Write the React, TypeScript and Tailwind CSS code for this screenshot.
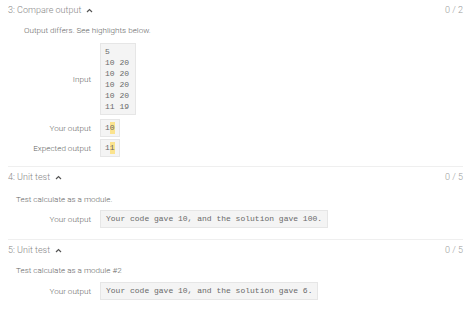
import React from "react";

const Caret = () => (
  <svg width="7" height="5" viewBox="0 0 7 5" className="ml-[5px] mt-[1px]">
    <path d="M1 4 L3.5 1.5 L6 4" fill="none" stroke="#555" strokeWidth="1.2" />
  </svg>
);

const Header = ({ title, score }: { title: string; score: string }) => (
  <div className="flex h-[20px] items-center justify-between text-[9px]">
    <div className="flex items-center text-[#888]">
      <span>{title}</span>
      <Caret />
    </div>
    <span className="text-[#999]">{score}</span>
  </div>
);

const mono = "font-['Liberation_Mono',monospace] text-[8px] text-[#6a6a6a]";

const Row = ({ label, children, className = "" }: { label: string; children: React.ReactNode; className?: string }) => (
  <div className={"flex items-center " + className}>
    <div className="w-[83px] text-right text-[#666]">{label}</div>
    <div className="ml-[9px]">{children}</div>
  </div>
);

const Hl = ({ c }: { c: string }) => <span className="bg-[#fbe38e]">{c}</span>;

export default function App() {
  return (
    <div className="w-[474px] h-[310px] bg-white pl-[8px] pr-[11px] font-['Roboto',sans-serif] text-[8.1px] font-light leading-[12px]">
      <Header title="3: Compare output" score="0 / 2" />
      <div className="mt-[4px] pl-[16px] text-[#666]">Output differs. See highlights below.</div>
      <Row label="Input" className="mt-[7px]">
        <div className={mono + " whitespace-pre bg-[#f4f4f4] border border-[#e6e6e6] px-[4px] py-[2px] leading-[11px] w-[36px]"}>
          {"5\n10 20\n10 20\n10 20\n10 20\n11 19"}
        </div>
      </Row>
      <Row label="Your output" className="mt-[4px]">
        <div className={mono + " bg-[#f4f4f4] border border-[#e6e6e6] px-[4px] h-[18px] flex items-center"}>
          1<Hl c="0" />
        </div>
      </Row>
      <Row label="Expected output" className="mt-[2px]">
        <div className={mono + " bg-[#f4f4f4] border border-[#e6e6e6] px-[4px] h-[18px] flex items-center"}>
          1<Hl c="1" />
        </div>
      </Row>
      <div className="mt-[9px] border-t border-[#efefef]" />
      <Header title="4: Unit test" score="0 / 5" />
      <div className="mt-[6px] pl-[8px] text-[#666]">Test calculate as a module.</div>
      <Row label="Your output" className="mt-[5px]">
        <div className={mono + " bg-[#f4f4f4] border border-[#e6e6e6] px-[5px] h-[18px] flex items-center whitespace-pre"}>
          Your code gave 10, and the solution gave 100.
        </div>
      </Row>
      <div className="mt-[11px] border-t border-[#efefef]" />
      <Header title="5: Unit test" score="0 / 5" />
      <div className="mt-[4px] pl-[8px] text-[#666]">Test calculate as a module #2</div>
      <Row label="Your output" className="mt-[6px]">
        <div className={mono + " bg-[#f4f4f4] border border-[#e6e6e6] px-[5px] h-[18px] flex items-center whitespace-pre"}>
          Your code gave 10, and the solution gave 6.
        </div>
      </Row>
    </div>
  );
}
